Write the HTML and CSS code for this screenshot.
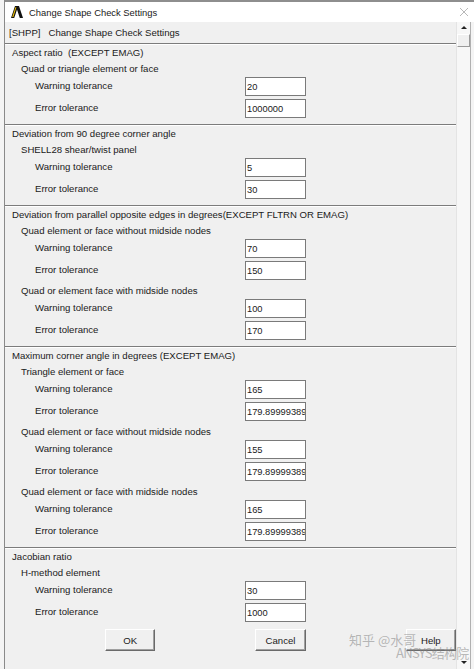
FILE: index.html
```html
<!DOCTYPE html>
<html>
<head>
<meta charset="utf-8">
<link rel="stylesheet" href="styles.css">
</head>
<body>
<div class="window">
  <div class="titlebar">
    <svg class="logo" width="12" height="12" viewBox="0 0 12 12">
      <polygon points="0,12 4,0 8,0 12,12 8.8,12 6,3.5 3.2,12" fill="#111"/>
      <polygon points="1.2,11 4.4,1.2 5.4,1.2 2.4,11" fill="#f2c200"/>
    </svg>
    <span class="title">Change Shape Check Settings</span>
    <svg class="close" width="10" height="10" viewBox="0 0 10 10">
      <path d="M1 1L9 9M9 1L1 9" stroke="#b8b8b8" stroke-width="1"/>
    </svg>
  </div>
  <div class="main">
    <div class="content">
      <div class="header"><span class="cmd">[SHPP]</span><span>Change Shape Check Settings</span></div>

      <div class="section">
        <div class="sec-title">Aspect ratio&nbsp; (EXCEPT EMAG)</div>
        <div class="sub">Quad or triangle element or face</div>
        <div class="field"><span class="lbl">Warning tolerance</span><input class="box" value="20"></div>
        <div class="field"><span class="lbl">Error tolerance</span><input class="box" value="1000000"></div>
      </div>

      <div class="section">
        <div class="sec-title">Deviation from 90 degree corner angle</div>
        <div class="sub">SHELL28 shear/twist panel</div>
        <div class="field"><span class="lbl">Warning tolerance</span><input class="box" value="5"></div>
        <div class="field"><span class="lbl">Error tolerance</span><input class="box" value="30"></div>
      </div>

      <div class="section">
        <div class="sec-title">Deviation from parallel opposite edges in degrees(EXCEPT FLTRN OR EMAG)</div>
        <div class="sub">Quad element or face without midside nodes</div>
        <div class="field"><span class="lbl">Warning tolerance</span><input class="box" value="70"></div>
        <div class="field"><span class="lbl">Error tolerance</span><input class="box" value="150"></div>
        <div class="sub">Quad or element face with midside nodes</div>
        <div class="field"><span class="lbl">Warning tolerance</span><input class="box" value="100"></div>
        <div class="field"><span class="lbl">Error tolerance</span><input class="box" value="170"></div>
      </div>

      <div class="section">
        <div class="sec-title">Maximum corner angle in degrees (EXCEPT EMAG)</div>
        <div class="sub">Triangle element or face</div>
        <div class="field"><span class="lbl">Warning tolerance</span><input class="box" value="165"></div>
        <div class="field"><span class="lbl">Error tolerance</span><input class="box" value="179.89999389"></div>
        <div class="sub">Quad element or face without midside nodes</div>
        <div class="field"><span class="lbl">Warning tolerance</span><input class="box" value="155"></div>
        <div class="field"><span class="lbl">Error tolerance</span><input class="box" value="179.89999389"></div>
        <div class="sub">Quad element or face with midside nodes</div>
        <div class="field"><span class="lbl">Warning tolerance</span><input class="box" value="165"></div>
        <div class="field"><span class="lbl">Error tolerance</span><input class="box" value="179.89999389"></div>
      </div>

      <div class="section last">
        <div class="sec-title">Jacobian ratio</div>
        <div class="sub">H-method element</div>
        <div class="field"><span class="lbl">Warning tolerance</span><input class="box" value="30"></div>
        <div class="field"><span class="lbl">Error tolerance</span><input class="box" value="1000"></div>
      </div>

      <div class="buttons">
        <button class="btn">OK</button>
        <button class="btn">Cancel</button>
        <button class="btn">Help</button>
      </div>
    </div>
    <div class="scrollbar">
      <div class="arrow up"></div>
      <div class="thumb"></div>
      <div class="track"></div>
      <div class="arrow down"></div>
    </div>
  </div>
  <div class="watermark">
    <span class="wm1">知乎 @水哥</span>
    <span class="wm2">ANSYS结构院</span>
  </div>
</div>
</body>
</html>
```

FILE: styles.css
```css
* { box-sizing: border-box; }
html, body { margin: 0; padding: 0; }
body {
  width: 474px;
  height: 669px;
  background: #f4f4f4;
  font-family: "Liberation Sans", Arial, sans-serif;
  font-size: 9.6px;
  color: #1a1a1a;
  overflow: hidden;
}
.window {
  position: relative;
  margin-left: 4px;
  width: 470px;
  height: 669px;
  border-left: 1px solid #8a8a8a;
  display: flex;
  flex-direction: column;
}
.titlebar {
  height: 22px;
  border-top: 2px solid #8e8e8e;
  background: #ffffff;
  display: flex;
  align-items: center;
  padding-left: 6px;
}
.logo { margin-right: 6px; }
.title { flex: 1; font-size: 9.4px; }
.close { margin-right: 5px; }
.main {
  flex: 1;
  display: flex;
}
.content {
  width: 451px;
  background: #f0f0f0;
  display: flex;
  flex-direction: column;
}
.header {
  height: 21px;
  display: flex;
  align-items: center;
  padding-left: 4px;
}
.cmd { margin-right: 8px; }
.section {
  border-top: 1px solid #7c7c7c;
  box-shadow: inset 0 1px 0 #ffffff;
  padding: 1px 0 3px;
}
.section.last { padding-bottom: 0; }
.sec-title {
  height: 16px;
  line-height: 16px;
  padding-left: 7px;
}
.sub {
  height: 16px;
  line-height: 16px;
  padding-left: 16px;
}
.field {
  height: 22px;
  display: flex;
  align-items: flex-start;
  padding-left: 30px;
}
.lbl {
  width: 210px;
  line-height: 17px;
}
.box {
  width: 61px;
  height: 19px;
  border: 1px solid #7a7a7a;
  background: #ffffff;
  padding: 0 0 0 1px;
  margin: 0;
  font-family: "Liberation Sans", Arial, sans-serif;
  font-size: 9.3px;
  color: #1a1a1a;
  outline: none;
}
.buttons {
  display: flex;
  gap: 100px;
  padding-left: 100px;
  margin-top: 4px;
}
.btn {
  width: 51px;
  height: 22px;
  margin: 0;
  padding: 0;
  background: #f0f0f0;
  border: 1px solid #f0f0f0;
  border-top-color: #ffffff;
  border-left-color: #ffffff;
  border-right-color: #6a6a6a;
  border-bottom-color: #6a6a6a;
  box-shadow: inset -1px -1px 0 #a0a0a0;
  font-family: "Liberation Sans", Arial, sans-serif;
  font-size: 9.6px;
  color: #1a1a1a;
}
.scrollbar {
  width: 15px;
  background: #f7f7f7;
  border-left: 1px solid #e4e4e4;
  border-right: 1px solid #b0b0b0;
  display: flex;
  flex-direction: column;
}
.arrow {
  height: 12px;
  position: relative;
}
.arrow::after {
  content: "";
  position: absolute;
  left: 4px;
  border-left: 3px solid transparent;
  border-right: 3px solid transparent;
}
.arrow.up::after { top: 4px; border-bottom: 3px solid #222; }
.arrow.down::after { top: 4px; border-top: 3px solid #222; }
.thumb {
  height: 13px;
  background: #f0f0f0;
  border: 1px solid #9a9a9a;
  border-top-color: #ffffff;
  border-left-color: #ffffff;
}
.track { flex: 1; }
.watermark {
  position: absolute;
  left: 340px;
  top: 633px;
  width: 128px;
  height: 30px;
  font-family: "Noto Sans CJK SC", "Liberation Sans", sans-serif;
  color: rgba(130, 130, 130, 0.55);
  white-space: nowrap;
  pointer-events: none;
}
.wm1 {
  position: absolute;
  left: 4px;
  top: 0;
  font-size: 13px;
  line-height: 13px;
}
.wm2 {
  position: absolute;
  left: 51px;
  top: 13px;
  font-size: 13px;
  line-height: 13px;
  letter-spacing: -0.7px;
}
```
